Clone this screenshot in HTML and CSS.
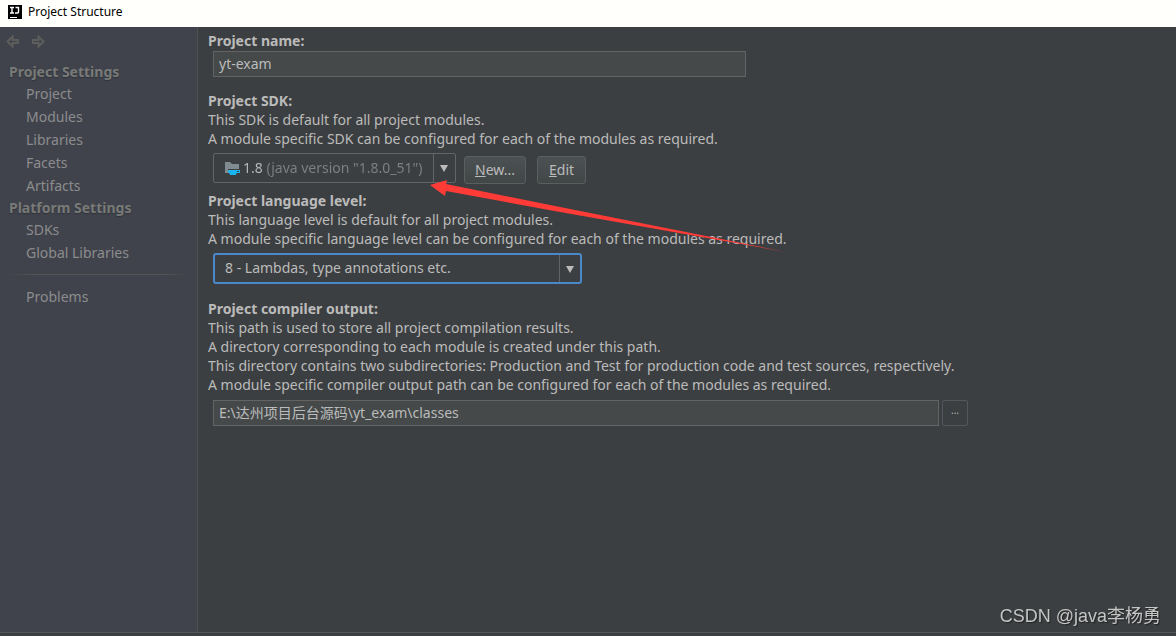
FILE: index.html
```html
<!DOCTYPE html>
<html lang="en">
<head>
    <meta charset="UTF-8">
    <meta name="viewport" content="width=device-width, initial-scale=1.0">
    <title>Project Structure</title>
    <link rel="stylesheet" href="styles.css">
</head>
<body>
    <header class="titlebar">
        <svg class="logo" width="14" height="14" viewBox="0 0 14 14">
            <rect width="14" height="14" fill="#000"/>
            <path d="M2 2.500h4M4 2.500v5M2 8h4M7.500 2.500h3v4.500q0 1-1 1H7" fill="none" stroke="#fff" stroke-width="1.400"/>
            <path d="M2 12.500h7" stroke="#fff" stroke-width="1"/>
        </svg>
        <h1>Project Structure</h1>
    </header>

    <div class="window">
        <aside class="sidebar">
            <div class="history">
                <button type="button" class="arrow-btn" aria-label="Back">
                    <svg width="13" height="13" viewBox="0 0 13 13"><path d="M1.500 6.500 6.500 1.500v3.500h5.500v3H6.500v3.500z" fill="none" stroke="#5d5e5c" stroke-width="2"/></svg>
                </button>
                <button type="button" class="arrow-btn" aria-label="Forward">
                    <svg width="13" height="13" viewBox="0 0 13 13"><path d="M11.500 6.500 6.500 1.500v3.500H1v3h5.500v3.500z" fill="none" stroke="#5d5e5c" stroke-width="2"/></svg>
                </button>
            </div>
            <nav>
                <h2>Project Settings</h2>
                <a href="#project">Project</a>
                <a href="#modules">Modules</a>
                <a href="#libraries">Libraries</a>
                <a href="#facets">Facets</a>
                <a href="#artifacts">Artifacts</a>
                <h2>Platform Settings</h2>
                <a href="#sdks">SDKs</a>
                <a href="#global">Global Libraries</a>
                <hr>
                <a href="#problems">Problems</a>
            </nav>
        </aside>

        <main class="content">
            <section class="group name-group">
                <label for="name">Project name:</label>
                <input type="text" id="name" class="field name-field" value="yt-exam">
            </section>

            <section class="group sdk-group">
                <label for="sdk">Project SDK:</label>
                <p>This SDK is default for all project modules.</p>
                <p>A module specific SDK can be configured for each of the modules as required.</p>
                <div class="row sdk-row">
                    <div class="combo sdk-combo">
                        <svg class="folder" width="16" height="14" viewBox="0 0 16 14">
                            <path d="M0 0h5l2 2h7v9H0z" fill="#7f8b91"/>
                            <path d="M3 7h12v1H3z" fill="#3c3f41"/>
                            <path d="M3 8h12v3h-3l-1 1v1H5v-1q-2-1-2-4z" fill="#18b4f4"/>
                            <path d="M12 9h2v1h-2z" fill="#3c3f41"/>
                        </svg>
                        <select id="sdk">
                            <option>1.8 (java version "1.8.0_51")</option>
                        </select>
                        <span class="combo-arrow"></span>
                    </div>
                    <button type="button" class="btn new-btn"><u>N</u>ew...</button>
                    <button type="button" class="btn"><u>E</u>dit</button>
                    <svg class="pointer" width="356" height="74" viewBox="0 0 356 74">
                        <path d="M0 6 17 1 16 5 130 28 266 55 356 73 266 57 130 33 16 12 15 17z" fill="#ff3b38"/>
                    </svg>
                </div>
            </section>

            <section class="group">
                <label for="level">Project language level:</label>
                <p>This language level is default for all project modules.</p>
                <p>A module specific language level can be configured for each of the modules as required.</p>
                <div class="row">
                    <div class="combo level-combo">
                        <select id="level">
                            <option>8 - Lambdas, type annotations etc.</option>
                        </select>
                        <span class="combo-arrow"></span>
                    </div>
                </div>
            </section>

            <section class="group">
                <label for="output">Project compiler output:</label>
                <p>This path is used to store all project compilation results.</p>
                <p>A directory corresponding to each module is created under this path.</p>
                <p>This directory contains two subdirectories: Production and Test for production code and test sources, respectively.</p>
                <p>A module specific compiler output path can be configured for each of the modules as required.</p>
                <div class="row output-row">
                    <input type="text" id="output" class="field" value="E:\达州项目后台源码\yt_exam\classes">
                    <button type="button" class="browse" aria-label="Browse">...</button>
                </div>
            </section>
        </main>
    </div>
    <footer class="bottom"></footer>
    <div class="watermark">CSDN @java李杨勇</div>
</body>
</html>
```
FILE: styles.css
```css
* {
    box-sizing: border-box;
}

body {
    margin: 0;
    min-height: 100vh;
    display: flex;
    flex-direction: column;
    background-color: #3c3f41;
    color: #bbbbbb;
    font-family: "Noto Sans", "Noto Sans CJK SC", sans-serif;
    font-size: 14px;
    line-height: 19px;
}

h1, h2, p {
    margin: 0;
}

input, select, button {
    font: inherit;
    color: inherit;
}

.titlebar {
    display: flex;
    align-items: center;
    gap: 6px;
    height: 27px;
    padding: 0 8px 4px;
    background-color: #fffffc;
    color: #000;
}

.titlebar h1 {
    font-size: 12px;
    font-weight: normal;
}

.window {
    flex: 1;
    display: flex;
}

/* Sidebar */
.sidebar {
    width: 198px;
    padding-top: 8px;
    background-color: #40434c;
    border-right: 1px solid #515151;
    color: #8c8c8c;
}

.history {
    display: flex;
    gap: 13px;
    height: 26px;
    padding-left: 6px;
}

.arrow-btn {
    height: 13px;
    padding: 0;
    border: none;
    background: none;
}

.arrow-btn svg {
    display: block;
}

.sidebar h2 {
    padding-left: 9px;
    font-size: 14px;
    line-height: 21px;
    color: #787a78;
    text-shadow: 0 1px 1px #303238;
}

.sidebar a {
    display: block;
    padding-left: 26px;
    line-height: 23px;
    color: inherit;
    text-decoration: none;
}

.sidebar hr {
    height: 1px;
    margin: 10px 8px;
    border: none;
    background: linear-gradient(to right, transparent, #555553 15%, #555553 85%, transparent);
}

/* Content */
.content {
    flex: 1;
    padding: 4px 10px;
}

.group {
    margin-bottom: 15px;
}

.group label {
    display: block;
    font-weight: bold;
}

.name-group {
    margin-bottom: 14px;
}

.sdk-group {
    margin-bottom: 7px;
}

.row {
    display: flex;
    margin: 5px 0 0 5px;
}

.field {
    height: 26px;
    padding: 0 5px 2px;
    background-color: #45494a;
    border: 1px solid #646464;
}

.name-field {
    display: block;
    width: 533px;
    max-width: 100%;
    margin: 1px 0 0 5px;
}

.sdk-row {
    position: relative;
    align-items: flex-end;
    gap: 11px;
}

.combo {
    position: relative;
    height: 30px;
    border: 1px solid #646464;
    border-radius: 2px;
}

.combo select {
    display: block;
    width: 100%;
    height: 100%;
    padding: 0 22px 2px 10px;
    appearance: none;
    border: none;
    outline: none;
    background: none;
}

.sdk-combo {
    width: 243px;
    margin-bottom: 1px;
}

/* version number is brighter than its description */
.sdk-combo select {
    padding-left: 29px;
    background: linear-gradient(to right, #bbbbbb 50px, #808080 50px);
    background-clip: text;
    color: transparent;
}

.sdk-combo option {
    color: #000;
}

.folder {
    position: absolute;
    left: 11px;
    top: 8px;
}

.level-combo {
    width: 369px;
    height: 31px;
    border: 2px solid #4a88c7;
    border-radius: 3px;
}

.combo-arrow {
    position: absolute;
    top: 0;
    right: 0;
    bottom: 0;
    width: 22px;
    border-left: 1px solid #646464;
    pointer-events: none;
}

.level-combo .combo-arrow {
    width: 21px;
}

.combo-arrow::after {
    content: "";
    position: absolute;
    left: 6px;
    top: 11px;
    border: 4px solid transparent;
    border-top: 7px solid #bbbbbb;
    border-bottom: none;
}

.btn {
    height: 28px;
    padding: 0 11px 1px;
    background: linear-gradient(#4c5253, #414647);
    border: 1px solid #5a5e5f;
    border-radius: 3px;
}

.new-btn {
    margin-left: -3px;
    padding: 0 10px 1px;
}

.pointer {
    position: absolute;
    left: 217px;
    top: 26px;
    z-index: 1;
    pointer-events: none;
}

.output-row {
    width: 755px;
    max-width: 100%;
    gap: 3px;
    margin-top: 6px;
}

.output-row .field {
    flex: 1;
}

.browse {
    width: 26px;
    height: 26px;
    padding: 0 0 5px;
    background: none;
    border: 1px solid #55585a;
    border-radius: 2px;
    font-size: 10px;
}

.bottom {
    height: 4px;
    border-top: 1px solid #555555;
}

.watermark {
    position: fixed;
    right: 15px;
    bottom: 7px;
    font-family: "Liberation Sans", "Noto Sans CJK SC", sans-serif;
    font-size: 18px;
    line-height: 26px;
    color: #c4c5c5;
    text-shadow: 1px 1px 1px #222;
}
```
